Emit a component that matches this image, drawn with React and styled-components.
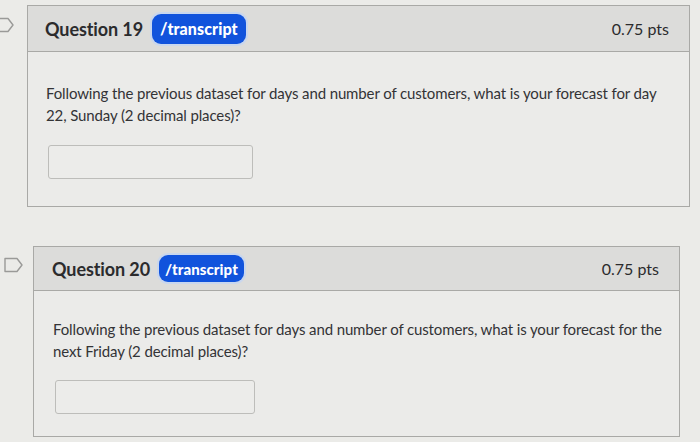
import styled, { createGlobalStyle } from 'styled-components';

const GlobalStyle = createGlobalStyle`
	html, body {
		margin: 0;
		padding: 0;
		background: #ebebe8;
	}
	body {
		font-family: Lato, 'Open Sans', sans-serif;
		color: #2d3b45;
	}
`;

const Page = styled.div`
	width: 700px;
	height: 442px;
	overflow: hidden;
	display: flex;
	flex-direction: column;
	background: #ebebe8;
`;

const Row = styled.div`
	display: flex;
	align-items: flex-start;
	margin-top: ${(p) => p.$top}px;
`;

const Gutter = styled.div`
	width: ${(p) => p.$width}px;
	flex-shrink: 0;
	display: flex;
	padding-top: ${(p) => p.$flagTop}px;
	padding-left: ${(p) => p.$flagLeft}px;
	box-sizing: border-box;
`;

const Flag = styled.svg`
	display: block;
	margin-left: ${(p) => p.$shift}px;
`;

const Card = styled.div`
	width: ${(p) => p.$width}px;
	height: ${(p) => p.$height}px;
	border: 1px solid #a9a9a6;
	background: #ebebe9;
	box-sizing: border-box;
	display: flex;
	flex-direction: column;
`;

const Header = styled.div`
	height: ${(p) => p.$height}px;
	flex-shrink: 0;
	background: #dcdcda;
	border-bottom: 1px solid #a9a9a6;
	display: flex;
	align-items: center;
	padding: 0 ${(p) => p.$right}px 0 ${(p) => p.$left}px;
	box-sizing: border-box;
`;

const Title = styled.h2`
	margin: 0;
	font-size: 18px;
	font-weight: 700;
	color: #2b2b2d;
	letter-spacing: -0.1px;
`;

const Badge = styled.span`
	margin-left: 9px;
	background: #1153dc;
	color: #fff;
	font-family: Lato, sans-serif;
	font-weight: 900;
	font-size: ${(p) => p.$size}px;
	letter-spacing: 0.1px;
	border-radius: 9px;
	padding: 0 ${(p) => p.$pad}px;
	height: ${(p) => p.$h}px;
	display: inline-flex;
	align-items: center;
	box-shadow: 0 0 0 2px #c9d7ee;
`;

const Points = styled.span`
	margin-left: auto;
	font-size: 16px;
	font-weight: 400;
	color: #2b2b2d;
`;

const Body = styled.div`
	padding: ${(p) => p.$top}px 8px 0 ${(p) => p.$left}px;
`;

const Question = styled.p`
	margin: 0;
	font-size: 15px;
	line-height: 22px;
	letter-spacing: -0.12px;
	color: #333336;
	max-width: ${(p) => p.$max}px;
`;

const Answer = styled.input`
	display: block;
	margin-top: ${(p) => p.$gap}px;
	margin-left: 2px;
	width: ${(p) => p.$width}px;
	height: 34px;
	border: 1px solid #bdbdba;
	border-radius: 3px;
	background: #ececea;
	box-sizing: border-box;
`;

function QuestionFlag({ shift }) {
	return (
		<Flag $shift={shift} width="20" height="16" viewBox="0 0 20 16">
			<path
				d="M1 1.5 H13 L18 8 L13 14.5 H1 Z"
				fill="none"
				stroke="#9a9a98"
				strokeWidth="1.4"
				strokeLinejoin="round"
			/>
		</Flag>
	);
}

export default function App() {
	return (
		<Page>
			<GlobalStyle />
			<Row $top={5}>
				<Gutter $width={27} $flagTop={12} $flagLeft={0}>
					<QuestionFlag shift={-5} />
				</Gutter>
				<Card $width={663} $height={202}>
					<Header $height={46} $left={17} $right={20}>
						<Title>Question 19</Title>
						<Badge $pad={8} $h={30} $size={16}>/transcript</Badge>
						<Points>0.75 pts</Points>
					</Header>
					<Body $top={30} $left={18}>
						<Question $max={625}>
							Following the previous dataset for days and number of customers, what is your forecast for day
							22, Sunday (2 decimal places)?
						</Question>
						<Answer $gap={19} $width={205} aria-label="answer 19" />
					</Body>
				</Card>
			</Row>
			<Row $top={39}>
				<Gutter $width={33} $flagTop={11} $flagLeft={4}>
					<QuestionFlag shift={0} />
				</Gutter>
				<Card $width={647} $height={191}>
					<Header $height={44} $left={18} $right={20}>
						<Title>Question 20</Title>
						<Badge $pad={6} $h={27} $size={15}>/transcript</Badge>
						<Points>0.75 pts</Points>
					</Header>
					<Body $top={27} $left={19}>
						<Question $max={615}>
							Following the previous dataset for days and number of customers, what is your forecast for the
							next Friday (2 decimal places)?
						</Question>
						<Answer $gap={18} $width={200} aria-label="answer 20" />
					</Body>
				</Card>
			</Row>
		</Page>
	);
}
